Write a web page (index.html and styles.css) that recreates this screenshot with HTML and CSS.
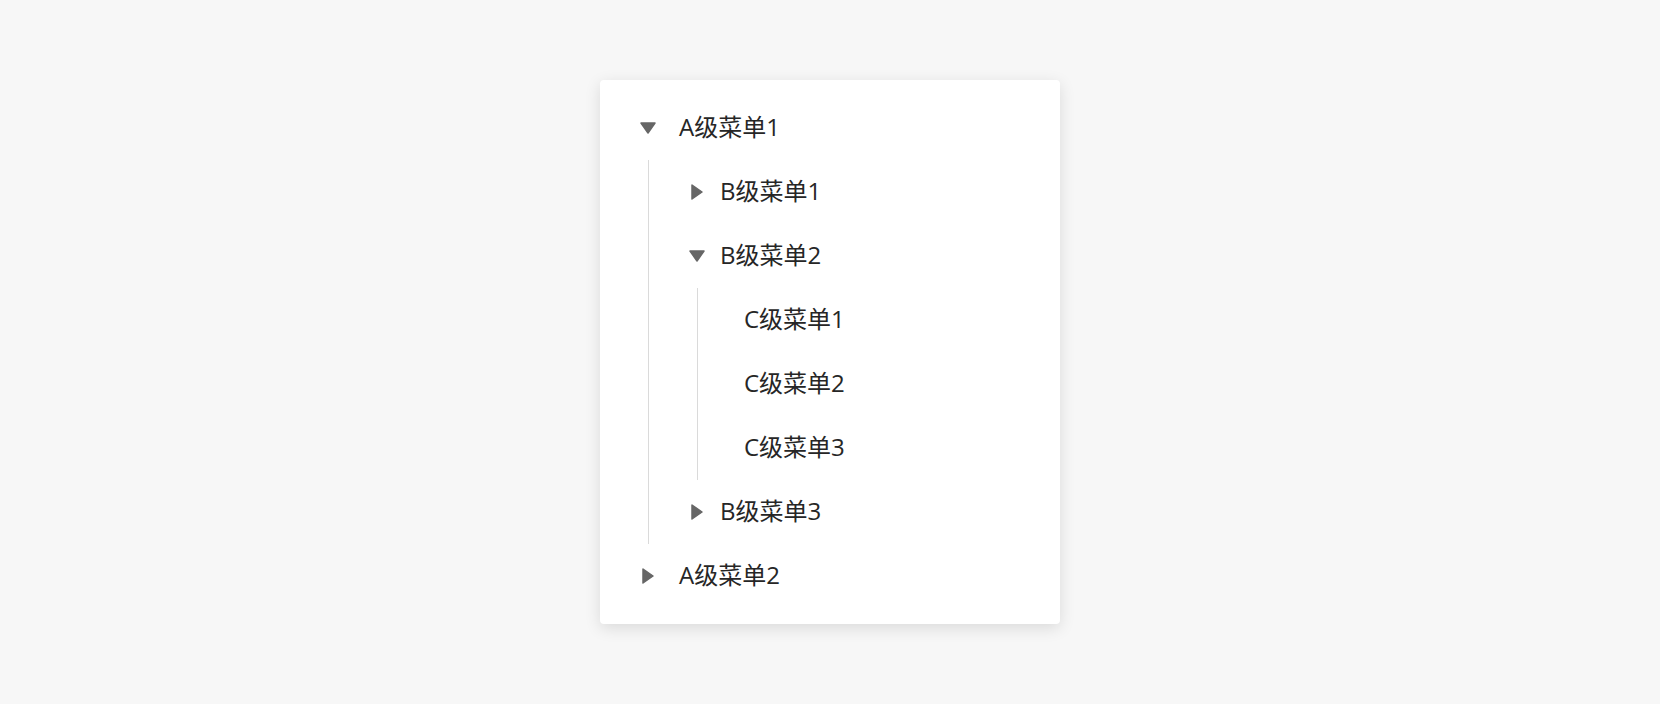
FILE: index.html
```html
<!DOCTYPE html>
<html lang="zh-CN">
<head>
    <meta charset="UTF-8">
    <meta name="viewport" content="width=device-width, initial-scale=1.0">
    <title>多级菜单</title>
    <link rel="stylesheet" href="styles.css">
</head>
<body>

<!-- Tree menu card -->
<div class="menu">
  <ul class="tree">
    <li>
      <div class="row">
        <span class="caret open"><svg viewBox="0 0 12 16"><polygon points="1,1 11,8 1,15"/></svg></span>
        <span class="label">A级菜单1</span>
      </div>
      <ul class="sub">
        <li>
          <div class="row">
            <span class="caret"><svg viewBox="0 0 12 16"><polygon points="1,1 11,8 1,15"/></svg></span>
            <span class="label">B级菜单1</span>
          </div>
        </li>
        <li>
          <div class="row">
            <span class="caret open"><svg viewBox="0 0 12 16"><polygon points="1,1 11,8 1,15"/></svg></span>
            <span class="label">B级菜单2</span>
          </div>
          <ul class="sub">
            <li><div class="row leaf"><span class="label">C级菜单1</span></div></li>
            <li><div class="row leaf"><span class="label">C级菜单2</span></div></li>
            <li><div class="row leaf"><span class="label">C级菜单3</span></div></li>
          </ul>
        </li>
        <li>
          <div class="row">
            <span class="caret"><svg viewBox="0 0 12 16"><polygon points="1,1 11,8 1,15"/></svg></span>
            <span class="label">B级菜单3</span>
          </div>
        </li>
      </ul>
    </li>
    <li>
      <div class="row">
        <span class="caret"><svg viewBox="0 0 12 16"><polygon points="1,1 11,8 1,15"/></svg></span>
        <span class="label">A级菜单2</span>
      </div>
    </li>
  </ul>
</div>

</body>
</html>
```

FILE: styles.css
```css
html, body {
    margin: 0;
    height: 100%;
}

body {
    background-color: #f7f7f7;
    font-family: "Open Sans", "Noto Sans CJK SC", sans-serif;
    display: flex;
    align-items: center;
    justify-content: center;
}

/* Card holding the tree */
.menu {
    width: 460px;
    padding: 16px 0;
    background-color: #fff;
    border-radius: 4px;
    box-shadow: 0 4px 16px rgba(0,0,0,0.12);
}

ul {
    list-style: none;
    margin: 0;
    padding: 0;
}

/* One menu line */
.row {
    height: 64px;
    display: flex;
    align-items: center;
    padding-left: 40px;
    cursor: pointer;
}

.label {
    font-size: 24px;
    color: #262626;
    margin-left: 23px;
    margin-bottom: 5px;
}

/* Triangle toggle */
.caret {
    width: 16px;
    height: 16px;
    display: flex;
    align-items: center;
    justify-content: center;
}

.caret svg {
    width: 12px;
    height: 16px;
    fill: #666;
    stroke: #666;
    stroke-width: 1.5;
    stroke-linejoin: round;
}

.caret.open svg {
    transform: rotate(90deg);
}

/* Nested level with the guide line */
.sub {
    margin-left: 48px;
    border-left: 1px solid #dadada;
}

.sub .label {
    margin-left: 15px;
}

.row.leaf {
    padding-left: 46px;
}

.row.leaf .label {
    margin-left: 0;
}
```
